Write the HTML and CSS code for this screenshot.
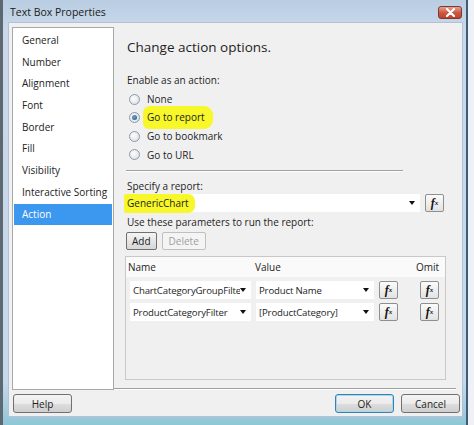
FILE: index.html
```html
<!DOCTYPE html>
<html>
<head>
<meta charset="utf-8">
<link rel="stylesheet" href="styles.css">
</head>
<body>
<div class="desk">
  <div class="window">
    <div class="titlebar">
      <span class="title">Text Box Properties</span>
      <span class="close"><svg width="11" height="9" viewBox="0 0 11 9"><path d="M2 1 L9 8 M9 1 L2 8" stroke="#fff" stroke-width="2.2" stroke-linecap="round"/></svg></span>
    </div>
    <div class="client">
      <div class="main">
        <ul class="nav">
          <li>General</li>
          <li>Number</li>
          <li>Alignment</li>
          <li>Font</li>
          <li>Border</li>
          <li>Fill</li>
          <li>Visibility</li>
          <li>Interactive Sorting</li>
          <li class="sel">Action</li>
        </ul>
        <div class="content">
          <h1 class="heading">Change action options.</h1>
          <div class="label first">Enable as an action:</div>
          <div class="radios">
            <div class="radio"><span class="dot"></span><span>None</span></div>
            <div class="radio on"><span class="dot"></span><span class="hl">Go to report</span></div>
            <div class="radio"><span class="dot"></span><span>Go to bookmark</span></div>
            <div class="radio"><span class="dot"></span><span>Go to URL</span></div>
          </div>
          <div class="sep"></div>
          <div class="label">Specify a report:</div>
          <div class="reportrow">
            <div class="combo wide"><span class="hl2">GenericChart</span><span class="arrow"></span></div>
            <span class="fx"><i>f</i><sub>x</sub></span>
          </div>
          <div class="label use">Use these parameters to run the report:</div>
          <div class="btns">
            <span class="sbtn">Add</span>
            <span class="sbtn dis">Delete</span>
          </div>
          <div class="grid">
            <div class="ghead">
              <span class="c-name">Name</span>
              <span class="c-val">Value</span>
              <span class="c-omit">Omit</span>
            </div>
            <div class="grow">
              <div class="combo name"><span class="clip">ChartCategoryGroupFilter</span><span class="arrow"></span></div>
              <div class="combo val"><span class="clip">Product Name</span><span class="arrow"></span></div>
              <span class="fx"><i>f</i><sub>x</sub></span>
              <span class="fx omit"><i>f</i><sub>x</sub></span>
            </div>
            <div class="grow">
              <div class="combo name"><span class="clip">ProductCategoryFilter</span><span class="arrow"></span></div>
              <div class="combo val"><span class="clip">[ProductCategory]</span><span class="arrow"></span></div>
              <span class="fx"><i>f</i><sub>x</sub></span>
              <span class="fx omit"><i>f</i><sub>x</sub></span>
            </div>
          </div>
          <div class="bottomsep"></div>
        </div>
      </div>
      <div class="footer">
        <span class="btn">Help</span>
        <span class="spacer"></span>
        <span class="btn def">OK</span>
        <span class="btn">Cancel</span>
      </div>
    </div>
  </div>
  <div class="behind"></div>
</div>
</body>
</html>
```
FILE: styles.css
```css
* { box-sizing: border-box; }
html, body { margin: 0; padding: 0; }
body {
  width: 474px; height: 425px; overflow: hidden;
  background: #d9e3ec;
  font-family: "Open Sans", "DejaVu Sans", sans-serif;
  font-size: 10px;
  color: #1e1e1e;
}
.desk { display: flex; height: 425px; }
.window {
  width: 468px; height: 425px;
  background: linear-gradient(#b9cde2, #c9d9ea 30px, #c6d8ea 90%, #8fc6d6);
  border-left: 3px solid #5d6873;
  border-right: 2px solid #3f5c78;
  padding: 0 3px 8px 5px;
  display: flex; flex-direction: column;
}
.behind { flex: 1; background: #eef2f6; }
.titlebar {
  height: 22px; flex: none; display: flex; align-items: center;
  padding-left: 2px; padding-right: 0;
}
.title { font-size: 10.5px; color: #1a1a1a; flex: 1; padding-top: 2px; }
.close {
  width: 24px; height: 13px; margin-top: 3px; margin-right: 1px;
  background: linear-gradient(#e8a190, #cf5a43 50%, #c0402a);
  border: 1px solid #7a3a30; border-radius: 3px;
  display: flex; align-items: center; justify-content: center;
}
.client {
  height: 395px; flex: none; background: #f0f0f0;
  border: 1px solid #b2c2d4;
  display: flex; flex-direction: column;
}
.main { display: flex; height: 367px; flex: none; }
.nav {
  list-style: none; margin: 4px 0 0 3px; padding: 2px 0 0;
  width: 102px; height: 363px; flex: none;
  background: #fff; border: 1px solid #a9a9a9;
  font-size: 10px;
}
.nav li { height: 21.7px; line-height: 21.7px; padding-left: 9px; color: #222; }
.nav li.sel { background: #3c97ee; color: #fff; margin: 0 1px; padding-left: 8px; }
.content { flex: 1; padding: 0 0 0 13px; display: flex; flex-direction: column; }
.heading {
  font-weight: normal; font-size: 13.5px; margin: 14px 0 0; color: #1e1e1e;
  line-height: 20px;
}
.label { font-size: 10px; line-height: 14px; }
.label.first { margin-top: 16px; }
.radios { display: flex; flex-direction: column; margin-top: 3px; padding-left: 2px; }
.radio { display: flex; align-items: center; height: 18.5px; font-size: 10px; }
.dot {
  width: 11px; height: 11px; border-radius: 50%;
  border: 1px solid #8d9aa6;
  background: radial-gradient(circle at 40% 40%, #fefefe, #d5d9dd);
  margin-right: 7px; position: relative; flex: none;
}
.radio.on .dot::after {
  content: ""; position: absolute; left: 2px; top: 2px; width: 5px; height: 5px;
  border-radius: 50%; background: radial-gradient(circle at 40% 40%, #6aa9d6, #1b4b7c);
}
.hl { background: #f7f72a; padding: 4px 8px 5px 4px; margin-left: -4px; border-radius: 7px 9px 9px 6px; }
.sep { height: 1px; background: #a0a0a0; border-bottom: 1px solid #fff; width: 277px; margin: 6px 0 0 -1px; box-sizing: content-box; }
.sep + .label { margin-top: 7px; }
.reportrow { display: flex; align-items: center; margin-top: 1px; margin-left: -2px; }
.combo {
  height: 18px; background: #fff; display: flex; align-items: center;
  position: relative; font-size: 10px;
}
.combo.wide { width: 295px; }
.arrow {
  position: absolute; right: 5px; top: 7px;
  width: 0; height: 0; border-left: 3.5px solid transparent; border-right: 3.5px solid transparent;
  border-top: 4px solid #111;
}
.hl2 { background: #f7f72a; padding: 3px 6px 3px 3px; margin-left: -1px; border-radius: 2px 7px 7px 2px; line-height: 13px; }
.fx {
  width: 19px; height: 18px; flex: none;
  border: 1px solid #8f8f8f; border-radius: 2px;
  background: linear-gradient(#fbfbfb, #e2e2e2);
  display: flex; align-items: center; justify-content: center;
  font-family: "Liberation Serif", serif; font-weight: bold; color: #111;
  font-size: 12px; line-height: 1;
}
.fx i { font-style: italic; }
.fx sub { font-size: 7px; font-style: italic; vertical-align: -1px; margin-left: 0; }
.reportrow .fx { margin-left: 5px; }
.use { margin-top: 3px; }
.btns { display: flex; gap: 5px; margin-top: 3px; margin-left: -1px; }
.sbtn {
  height: 18px; padding: 0 5px; display: flex; align-items: center;
  border: 1px solid #707070; border-radius: 2px;
  background: linear-gradient(#f4f4f4, #e6e6e6 50%, #d6d6d6);
  font-size: 10px;
}
.sbtn.dis { color: #a0a0a0; border-color: #c0c0c0; background: #f4f4f4; padding: 0 6px; }
.grid {
  margin-top: 6px; margin-left: -2px; width: 321px; height: 124px; flex: none;
  border: 1px solid #c8c8c8; background: #f0f0f0;
  display: flex; flex-direction: column;
}
.ghead { display: flex; height: 20px; align-items: center; font-size: 10px; background: #fafafa; }
.c-name { width: 129px; padding-left: 2px; }
.c-val { width: 161px; }
.grow { display: flex; align-items: center; height: 18px; margin-top: 4px; padding-left: 4px; }
.combo.name { width: 121px; }
.combo.val { width: 118px; margin-left: 5px; }
.grow .combo { font-size: 9.6px; letter-spacing: -0.15px; }
.clip { overflow: hidden; white-space: nowrap; width: calc(100% - 11px); padding-left: 3px; }
.grow .fx { margin-left: 5px; }
.grow .fx.omit { margin-left: 22px; }
.bottomsep { margin-top: 8px; height: 1px; background: #a0a0a0; border-bottom: 1px solid #fff; box-sizing: content-box; margin-left: -13px; width: 342px; }
.footer { display: flex; padding: 4px 2px 3px 4px; gap: 7px; height: 26px; flex: none; }
.spacer { flex: 1; }
.btn {
  width: 59px; height: 19px; display: flex; align-items: center; justify-content: center;
  border: 1px solid #707070; border-radius: 3px;
  background: linear-gradient(#f3f3f3, #ebebeb 50%, #dddddd 51%, #cfcfcf);
  font-size: 10px;
}
.btn.def { border-color: #3c7fb1; box-shadow: inset 0 0 0 1px #9fdcf3; }
```
